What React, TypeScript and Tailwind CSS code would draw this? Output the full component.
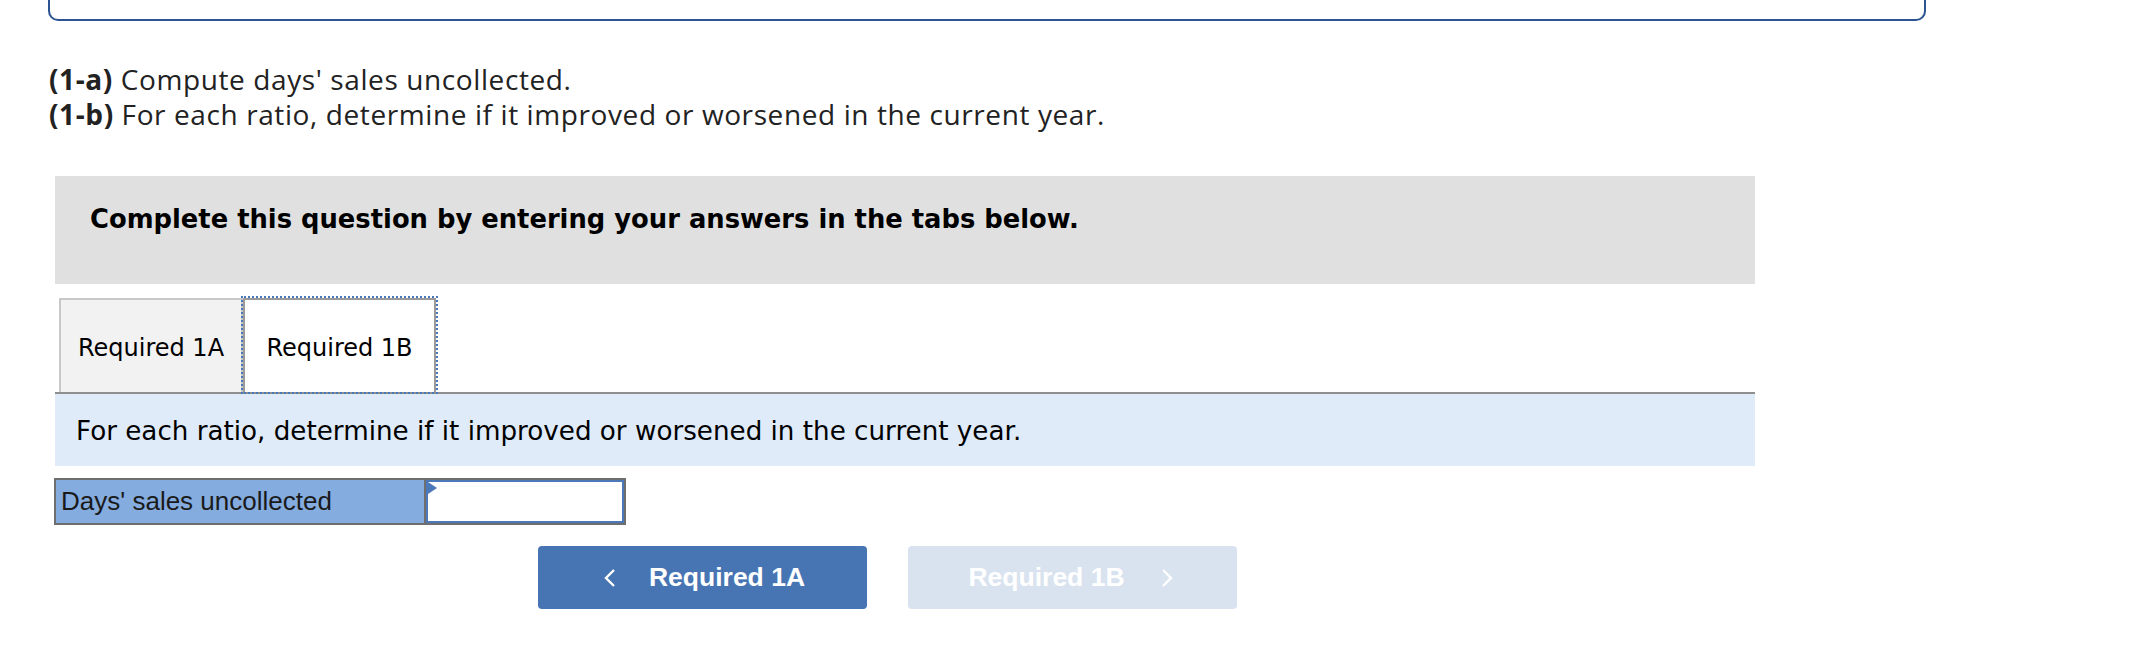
import React from "react";

function Chevron({ dir }: { dir: "left" | "right" }) {
  return (
    <svg width="12" height="20" viewBox="0 0 12 20" fill="none" className="shrink-0">
      <polyline
        points={dir === "left" ? "10,2 2,10 10,18" : "2,2 10,10 2,18"}
        stroke="currentColor"
        strokeWidth="2.4"
        strokeLinejoin="miter"
      />
    </svg>
  );
}

export default function App() {
  return (
    <div className="w-[2150px] h-[670px] bg-white overflow-hidden">
      <div className="ml-[48px] w-[1878px] h-[21px] border-x-2 border-b-2 border-[#2b5491] rounded-b-[10px]" />

      <div className="ml-[49px] mt-[41px] font-['Open_Sans',sans-serif] text-[28px] tracking-[0.6px] leading-[35px] text-[#222]">
        <p>
          <b>(1-a)</b> Compute days' sales uncollected.
        </p>
        <p>
          <b>(1-b)</b> For each ratio, determine if it improved or worsened in the current year.
        </p>
      </div>

      <div className="ml-[55px] mt-[44px] w-[1700px]">
        <div className="h-[108px] bg-[#e0e0e0] pt-[28px] pl-[35px] leading-[30px] font-['DejaVu_Sans',sans-serif] font-bold text-[25.8px] text-black">
          Complete this question by entering your answers in the tabs below.
        </div>

        <div className="mt-[14px] h-[96px] pl-[4px] flex items-end border-b-2 border-[#8f8f8f] font-['DejaVu_Sans',sans-serif] text-[24px] text-black">
          <div className="h-[94px] w-[184px] pt-[4px] bg-[#f2f2f2] border-x-2 border-t-2 border-[#c8c8c8] flex items-center justify-center">
            Required 1A
          </div>
          <div className="h-[94px] w-[193px] pt-[4px] bg-white border-x-2 border-t-2 border-[#9a9a9a] flex items-center justify-center outline-2 outline-dotted outline-[#4a79b8]">
            Required 1B
          </div>
        </div>

        <div className="h-[72px] bg-[#dfebf8] flex items-center pl-[21px] pt-[3px] font-['DejaVu_Sans',sans-serif] text-[26.2px] text-black">
          For each ratio, determine if it improved or worsened in the current year.
        </div>

        <div className="mt-[12px] -ml-px w-[572px] h-[47px] flex border-2 border-[#6e6e6e] font-['Liberation_Sans',sans-serif] text-[26px] text-[#1a1a1a]">
          <div className="w-[370px] bg-[#84acdf] border-r-2 border-[#6e6e6e] flex items-center pl-[5px]">
            Days' sales uncollected
          </div>
          <div className="relative flex-1 border-2 border-[#4a78b9] bg-white">
            <span className="absolute left-0 top-0 w-0 h-0 border-y-[6px] border-y-transparent border-l-[9px] border-l-[#4a78b9]" />
          </div>
        </div>

        <div className="mt-[21px] ml-[483px] flex gap-[41px] font-['Liberation_Sans',sans-serif] font-bold text-[26.5px] text-white">
          <button className="w-[329px] h-[63px] rounded-[4px] bg-[#4775b3] flex items-center justify-center gap-[33px] pl-[4px]">
            <Chevron dir="left" />
            <span>Required 1A</span>
          </button>
          <button className="w-[329px] h-[63px] rounded-[4px] bg-[#d9e3ef] flex items-center justify-center gap-[36px] pr-[4px]">
            <span>Required 1B</span>
            <Chevron dir="right" />
          </button>
        </div>
      </div>
    </div>
  );
}
